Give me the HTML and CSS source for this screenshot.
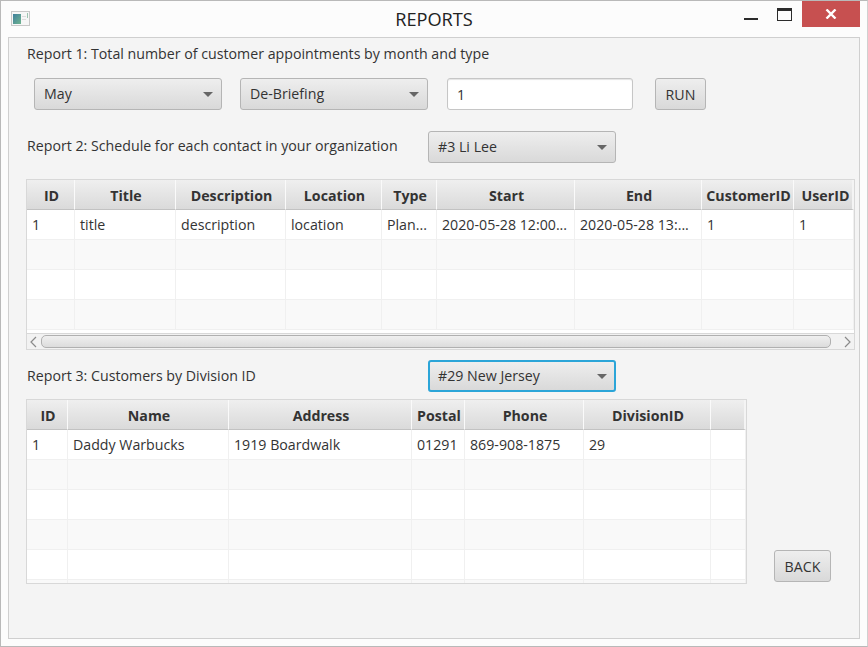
FILE: index.html
```html
<!DOCTYPE html>
<html lang="en">
<head>
  <meta charset="UTF-8" />
  <title>REPORTS</title>
  <link rel="stylesheet" href="styles.css">
</head>
<body>
  <div class="window">
    <div class="titlebar">
      <svg class="app-icon" width="19" height="15" viewBox="0 0 19 15">
        <defs>
          <linearGradient id="iconFill" x1="0" y1="0" x2="1" y2="1">
            <stop offset="0" stop-color="#3f7f9c"/>
            <stop offset="1" stop-color="#6fb48f"/>
          </linearGradient>
        </defs>
        <rect x="0.5" y="0.5" width="18" height="14" fill="#f6f6f6" stroke="#c8c8c8"/>
        <rect x="2" y="3" width="8" height="10" fill="url(#iconFill)"/>
        <rect x="11" y="5" width="4" height="1" fill="#dcdcdc"/>
        <rect x="11" y="8" width="4" height="1" fill="#dcdcdc"/>
        <rect x="16" y="2" width="1" height="5" fill="#9cc4b0"/>
      </svg>
      <div class="title">REPORTS</div>
      <div class="caption">
        <div class="btn-min"></div>
        <div class="btn-max"></div>
        <div class="btn-close">
          <svg width="12" height="10" viewBox="0 0 12 10"><path d="M1.5 0.5 L10.5 9.5 M10.5 0.5 L1.5 9.5" stroke="#fff" stroke-width="2.4" fill="none"/></svg>
        </div>
      </div>
    </div>

    <div class="content">
      <div class="label report1">Report 1: Total number of customer appointments by month and type</div>

      <div class="row1">
        <div class="combo">May<span class="arrow"></span></div>
        <div class="combo">De-Briefing<span class="arrow"></span></div>
        <input class="field" type="text" value="1">
        <button class="btn run">RUN</button>
      </div>

      <div class="row2">
        <div class="label row-label">Report 2: Schedule for each contact in your organization</div>
        <div class="combo">#3 Li Lee<span class="arrow"></span></div>
      </div>

      <div class="tableview t1">
        <div class="clip">
          <table>
            <colgroup>
              <col class="w48"><col class="w101"><col class="w110"><col class="w96"><col class="w55"><col class="w138"><col class="w127"><col class="w92"><col class="w60">
            </colgroup>
            <thead>
              <tr><th>ID</th><th>Title</th><th>Description</th><th>Location</th><th>Type</th><th>Start</th><th>End</th><th>CustomerID</th><th>UserID</th></tr>
            </thead>
            <tbody>
              <tr><td>1</td><td>title</td><td>description</td><td>location</td><td>Plan...</td><td>2020-05-28 12:00...</td><td>2020-05-28 13:...</td><td>1</td><td>1</td></tr>
              <tr><td></td><td></td><td></td><td></td><td></td><td></td><td></td><td></td><td></td></tr>
              <tr><td></td><td></td><td></td><td></td><td></td><td></td><td></td><td></td><td></td></tr>
              <tr><td></td><td></td><td></td><td></td><td></td><td></td><td></td><td></td><td></td></tr>
            </tbody>
          </table>
        </div>
        <div class="scrollbar">
          <svg class="sb-arrow" width="7" height="12" viewBox="0 0 7 12"><path d="M6 1 L1 6 L6 11" stroke="#8a8a8a" stroke-width="1.2" fill="none"/></svg>
          <div class="thumb"></div>
          <svg class="sb-arrow" width="7" height="12" viewBox="0 0 7 12"><path d="M1 1 L6 6 L1 11" stroke="#8a8a8a" stroke-width="1.2" fill="none"/></svg>
        </div>
      </div>

      <div class="row3">
        <div class="label row-label">Report 3: Customers by Division ID</div>
        <div class="combo focused">#29 New Jersey<span class="arrow"></span></div>
      </div>

      <div class="bottom">
        <div class="tableview t2">
          <div class="clip">
            <table>
              <colgroup>
                <col class="w41"><col class="w161"><col class="w183"><col class="w53"><col class="w119"><col class="w127"><col class="w35">
              </colgroup>
              <thead>
                <tr><th>ID</th><th>Name</th><th>Address</th><th>Postal</th><th>Phone</th><th>DivisionID</th><th></th></tr>
              </thead>
              <tbody>
                <tr><td>1</td><td>Daddy Warbucks</td><td>1919 Boardwalk</td><td>01291</td><td>869-908-1875</td><td>29</td><td></td></tr>
                <tr><td></td><td></td><td></td><td></td><td></td><td></td><td></td></tr>
                <tr><td></td><td></td><td></td><td></td><td></td><td></td><td></td></tr>
                <tr><td></td><td></td><td></td><td></td><td></td><td></td><td></td></tr>
                <tr><td></td><td></td><td></td><td></td><td></td><td></td><td></td></tr>
                <tr><td></td><td></td><td></td><td></td><td></td><td></td><td></td></tr>
              </tbody>
            </table>
          </div>
        </div>
        <button class="btn back">BACK</button>
      </div>
    </div>
  </div>
</body>
</html>
```

FILE: styles.css
```css
* {
  box-sizing: border-box;
}

body {
  margin: 0;
  font-family: "Open Sans", "Noto Sans", sans-serif;
  font-size: 14.2px;
  color: #333;
  background: #fff;
}

.window {
  width: 868px;
  height: 647px;
  background: #fcfcfc;
  border: 1px solid #b9b9b9;
  border-right-color: #d0d0d0;
  display: flex;
  flex-direction: column;
}

/* Title bar */
.titlebar {
  height: 36px;
  display: flex;
  position: relative;
  flex-shrink: 0;
}

.app-icon {
  margin: 10px 0 0 10px;
}

.title {
  position: absolute;
  left: 0;
  right: 0;
  top: 6px;
  text-align: center;
  font-size: 18.2px;
  line-height: 24px;
  color: #222;
}

.caption {
  position: absolute;
  top: 0;
  right: 7px;
  display: flex;
}

.btn-min {
  width: 14px;
  height: 2px;
  margin-top: 17px;
  background: #2b2b2b;
}

.btn-max {
  width: 15px;
  height: 13px;
  margin: 7px 10px 0 19px;
  border: 1px solid #2b2b2b;
  border-top-width: 3px;
}

.btn-close {
  width: 58px;
  height: 26px;
  background: #c75050;
  display: flex;
  align-items: center;
  justify-content: center;
}

/* Main panel */
.content {
  flex: 1;
  margin: 0 7px 7px 7px;
  padding: 0 4px 0 18px;
  background: #f4f4f4;
  border: 1px solid #cfcfcf;
}

.label {
  line-height: 20px;
  color: #333;
  white-space: nowrap;
}

.report1 {
  margin-top: 6px;
}

.row1 {
  display: flex;
  margin: 14px 0 0 7px;
}

.row1 .combo {
  margin-right: 18px;
}

.row2 {
  display: flex;
  align-items: center;
  margin-top: 21px;
}

.row2 .row-label {
  margin-bottom: 2px;
}

.row3 {
  display: flex;
  align-items: center;
  margin-top: 10px;
}

.row-label {
  width: 401px;
}

.combo {
  position: relative;
  width: 188px;
  height: 32px;
  padding-left: 9px;
  line-height: 30px;
  border: 1px solid #b5b5b5;
  border-radius: 3px;
  background: linear-gradient(#eeeeee, #d9d9d9);
}

.combo.focused {
  border: 2px solid #2ba5d8;
  padding-left: 8px;
  line-height: 28px;
}

.combo.focused .arrow {
  top: 12px;
  right: 7px;
}

.arrow {
  position: absolute;
  right: 8px;
  top: 13px;
  border-left: 5px solid transparent;
  border-right: 5px solid transparent;
  border-top: 5px solid #666;
}

.field {
  width: 186px;
  height: 32px;
  margin: 0 22px 0 1px;
  padding: 0 9px;
  font: inherit;
  color: #333;
  background: #fff;
  border: 1px solid #c6c6c6;
  border-radius: 3px;
  box-shadow: inset 0 1px 1px #e4e4e4;
}

.btn {
  height: 32px;
  padding: 0;
  font: inherit;
  color: #333;
  border: 1px solid #b5b5b5;
  border-radius: 3px;
  background: linear-gradient(#eeeeee, #d9d9d9);
}

.run {
  width: 51px;
}

.back {
  width: 57px;
  margin: 0 0 2px 27px;
}

/* Table views */
.tableview {
  background: #fff;
  border: 1px solid #d8d8d8;
  overflow: hidden;
}

.t1 {
  width: 829px;
  height: 171px;
  margin: 16px 0 0 -1px;
}

.t1 .clip {
  height: 153px;
  overflow: hidden;
}

.t2 {
  width: 721px;
  height: 185px;
  margin-left: -1px;
}

.t2 .clip {
  height: 183px;
  overflow: hidden;
}

.bottom {
  display: flex;
  align-items: flex-end;
  margin-top: 7px;
}

table {
  table-layout: fixed;
  width: 100%;
  border-collapse: separate;
  border-spacing: 0;
}

th {
  height: 30px;
  padding: 2px 1px 0 3px;
  font-size: 14.2px;
  font-weight: 700;
  color: #333;
  white-space: nowrap;
  overflow: hidden;
  background: linear-gradient(#efefef, #dadada);
  border-right: 1px solid #fafafa;
  border-bottom: 1px solid #c2c2c2;
}

th:last-child {
  padding-left: 6px;
  border-right: 2px solid #f4f4f4;
}

td {
  height: 30px;
  padding: 0 5px;
  white-space: nowrap;
  overflow: hidden;
  border-right: 1px solid #f0f0f0;
  border-bottom: 1px solid #f0f0f0;
}

tbody tr:nth-child(even) td {
  background: #f9f9f9;
}

.w35 { width: 35px; }
.w41 { width: 41px; }
.w48 { width: 48px; }
.w53 { width: 53px; }
.w55 { width: 55px; }
.w60 { width: 60px; }
.w92 { width: 92px; }
.w96 { width: 96px; }
.w101 { width: 101px; }
.w110 { width: 110px; }
.w119 { width: 119px; }
.w127 { width: 127px; }
.w138 { width: 138px; }
.w161 { width: 161px; }
.w183 { width: 183px; }

/* Horizontal scrollbar */
.scrollbar {
  height: 16px;
  display: flex;
  align-items: center;
  padding: 0 3px;
  background: #f2f2f2;
  border-top: 1px solid #d8d8d8;
}

.thumb {
  flex: 1;
  height: 13px;
  margin: 0 13px 0 4px;
  border: 1px solid #b0b0b0;
  border-radius: 5px;
  background: linear-gradient(#f0f0f0, #dcdcdc);
}

.sb-arrow {
  flex-shrink: 0;
}
```
